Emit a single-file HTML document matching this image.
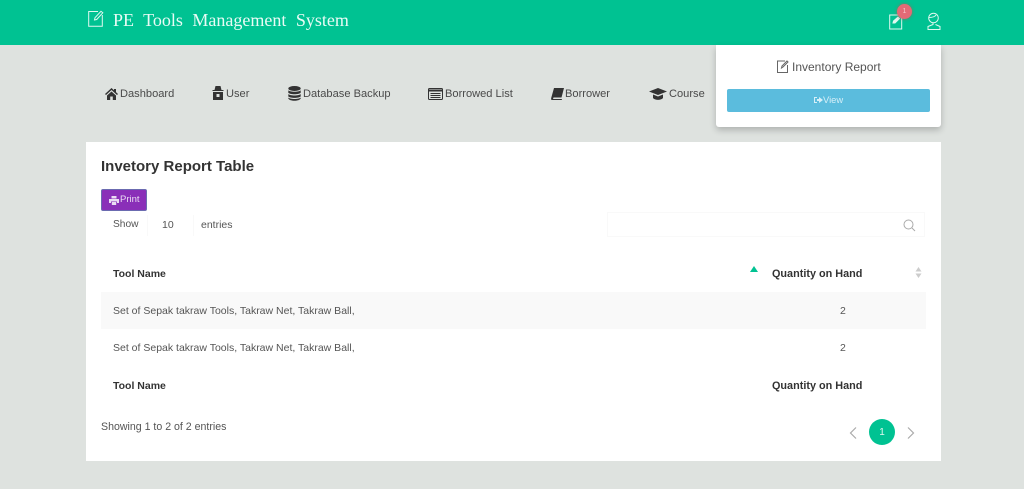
<!DOCTYPE html>
<html><head><meta charset="utf-8">
<style>
html,body{margin:0;padding:0}
body{width:1024px;height:489px;overflow:hidden;background:#dee2df;position:relative;font-family:"Liberation Sans",sans-serif;color:#444}
.a{position:absolute;white-space:nowrap}
svg{position:absolute;overflow:visible}
.nav{font-size:11.1px;color:#4a4a4a;top:87px;line-height:14px}
.th{font-size:10.5px;font-weight:bold;color:#333;line-height:14px}
.q{font-size:10.85px}
.td{font-size:10.5px;color:#555;line-height:14px}
</style></head><body>
<div class="a" style="left:0;top:0;width:1024px;height:45px;background:#00c292"></div>
<svg style="left:88px;top:9px" width="16" height="18" viewBox="0 0 16 18" fill="none" stroke="#dff8f0" stroke-width="1"><path d="M10 2.500H.7V17.300H14.300V6"/><path d="M6.500 11L7 8.700 13 2.300l1.800 1.500L8.700 10.500z"/></svg>
<div class="a" style="left:113px;top:10px;font:18px/20px 'Liberation Serif',serif;color:#e8fbf5;word-spacing:5px">PE Tools Management System</div>

<svg style="left:889px;top:13px" width="14" height="17" viewBox="0 0 14 17" fill="none" stroke="#dff8f0" stroke-width="1"><path d="M.7 2H12.700V16H.7z"/><path d="M4 10l.5-2L9 4l1.500 1.500L6 10z" fill="#dff8f0"/></svg>
<div class="a" style="left:897px;top:4px;width:15px;height:15px;border-radius:50%;background:#e46a76;box-shadow:0 0 3px rgba(180,90,80,.8);color:#f6c6cb;font-size:7px;line-height:15px;text-align:center">1</div>
<svg style="left:926px;top:12px" width="16" height="18" viewBox="0 0 16 18" fill="none" stroke="#dff8f0" stroke-width="1"><circle cx="7.500" cy="6" r="4.800"/><path d="M3 5.500c3 0 6-1 7-2.500M7 11v1.500L2 14.500v3h12v-3L9.500 12.500"/></svg>

<div class="a" style="left:716px;top:45px;width:225px;height:82px;background:#fff;border-radius:0 0 3px 3px;box-shadow:0 3px 7px rgba(0,0,0,.22)"></div>
<svg style="left:777px;top:60px" width="12" height="13" viewBox="0 0 12 13" fill="none" stroke="#666" stroke-width="1"><path d="M8 1H.5V12.500H10.500V5"/><path d="M4.500 8L5 6l5-5 1 1-5 5z"/></svg>
<div class="a" style="left:792px;top:59px;font-size:12px;line-height:16px;color:#555">Inventory Report</div>
<div class="a" style="left:727px;top:89px;width:203px;height:23px;background:#5bbcdd;border-radius:2px"></div>
<svg style="left:814px;top:96px" width="9" height="8" viewBox="0 0 9 8" fill="#d6eff8"><path d="M0 1h3v1H1v4h2v1H0z"/><path d="M3 3h2V1l4 3-4 3V5H3z"/></svg>
<div class="a" style="left:823px;top:94px;font-size:9.400px;line-height:12px;color:#d6eff8">View</div>

<svg style="left:105px;top:88px" width="13" height="12" viewBox="0 0 13 12" fill="#333"><path d="M6.500 0L0 6l1 1 5.500-5L12 7l1-1-2-1.900V1H9v1.300z"/><path d="M2 7.500L6.500 3.500 11 7.500V12H7.800V8.500H5.200V12H2z"/></svg>
<div class="a nav" style="left:120px">Dashboard</div>
<svg style="left:212px;top:86px" width="12" height="14" viewBox="0 0 12 14" fill="#333"><path d="M3.500 0h5l1 4h2v1H.5V4h2z"/><path d="M1 6h10v8H1z"/><rect x="4.500" y="8" width="3" height="3" fill="#dee2df"/></svg>
<div class="a nav" style="left:226px">User</div>
<svg style="left:288px;top:86px" width="13" height="15" viewBox="0 0 13 15" fill="#333"><ellipse cx="6.500" cy="2.500" rx="6.200" ry="2.500"/><path d="M.3 4.300c1.500 2 11 2 12.400 0v2.400c-1.500 2-11 2-12.400 0zM.3 8c1.500 2 11 2 12.400 0v2.400c-1.500 2-11 2-12.400 0zM.3 11.500c1.500 2 11 2 12.400 0v1c-1.500 3-11 3-12.400 0z"/></svg>
<div class="a nav" style="left:303px">Database Backup</div>
<svg style="left:428px;top:88px" width="15" height="12" viewBox="0 0 15 12" fill="none" stroke="#333"><rect x=".5" y=".5" width="14" height="11" rx="1"/><path d="M.5 2.500h14" stroke-width="2"/><path d="M2.500 5.500h10M2.500 7.500h10M2.500 9.500h10"/></svg>
<div class="a nav" style="left:445px">Borrowed List</div>
<svg style="left:551px;top:88px" width="13" height="12" viewBox="0 0 13 12" fill="#333"><path d="M3 0h10l-2.500 9.500H2.500L2 11h9l-.3 1H1C0 12 0 11 .2 10z"/></svg>
<div class="a nav" style="left:565px">Borrower</div>
<svg style="left:649px;top:88px" width="18" height="12" viewBox="0 0 18 12" fill="#333"><path d="M9 0L0 3.500 9 7l9-3.500z"/><path d="M4 6.500V10c2 2.500 8 2.500 10 0V6.500L9 8.500z"/></svg>
<div class="a nav" style="left:669px">Course</div>

<div class="a" style="left:86px;top:142px;width:855px;height:319px;background:#fff"></div>
<div class="a" style="left:101px;top:158px;font-size:15px;line-height:18px;font-weight:bold;color:#333">Invetory Report Table</div>
<div class="a" style="left:101px;top:189px;width:44px;height:20px;background:#8a2fb8;border:1px solid #6b6bb0;border-radius:2px"></div>
<svg style="left:109px;top:196px" width="10" height="9" viewBox="0 0 10 9" fill="#eadcf3"><path d="M2.500 0h5v2.500h-5z"/><path d="M0 3h10v4H8V5.500H2V7H0z"/><path d="M2.800 6h4.400v3H2.800z"/></svg>
<div class="a" style="left:120px;top:194px;font-size:9.500px;line-height:12px;color:#eadcf3">Print</div>
<div class="a td" style="left:113px;top:218px;font-size:10.200px">Show</div>
<div class="a" style="left:147px;top:215px;width:45px;height:21px;border:1px solid #f9f9f9;border-width:0 1px"></div>
<div class="a td" style="left:162px;top:218px">10</div>
<div class="a td" style="left:201px;top:218px">entries</div>
<div class="a" style="left:607px;top:212px;width:318px;height:25px;border:1px solid #f9f9f9;box-sizing:border-box"></div>
<svg style="left:903px;top:219px" width="13" height="13" viewBox="0 0 13 13" fill="none" stroke="#aaa"><circle cx="5.500" cy="5.500" r="4.500"/><path d="M9 9l3 3"/></svg>

<div class="a th" style="left:113px;top:267px">Tool Name</div>
<svg style="left:750px;top:266px" width="8" height="6"><path d="M0 6L4 0l4 6z" fill="#00c292"/></svg>
<div class="a th q" style="left:772px;top:267px">Quantity on Hand</div>
<svg style="left:915px;top:267px" width="7" height="11" fill="#ccc"><path d="M.5 4.500L3.500 0l3 4.500zM.5 6.500l3 4.500 3-4.500z"/></svg>
<div class="a" style="left:101px;top:292px;width:825px;height:37px;background:#f9f9f9"></div>
<div class="a td" style="left:113px;top:304px">Set of Sepak takraw Tools, Takraw Net, Takraw Ball,</div>
<div class="a td" style="left:840px;top:304px">2</div>
<div class="a td" style="left:113px;top:341px">Set of Sepak takraw Tools, Takraw Net, Takraw Ball,</div>
<div class="a td" style="left:840px;top:341px">2</div>
<div class="a th" style="left:113px;top:379px">Tool Name</div>
<div class="a th q" style="left:772px;top:379px">Quantity on Hand</div>
<div class="a td" style="left:101px;top:420px;font-size:10.600px">Showing 1 to 2 of 2 entries</div>
<svg style="left:849px;top:427px" width="8" height="12" fill="none" stroke="#aaa" stroke-width="1.200"><path d="M7 .5L1.500 6 7 11.500"/></svg>
<div class="a" style="left:869px;top:419px;width:26px;height:26px;border-radius:50%;background:#00c292;color:#e0f8f0;font-size:10px;line-height:27px;text-align:center">1</div>
<svg style="left:907px;top:427px" width="8" height="12" fill="none" stroke="#aaa" stroke-width="1.200"><path d="M1 .5L6.500 6 1 11.500"/></svg>
</body></html>
